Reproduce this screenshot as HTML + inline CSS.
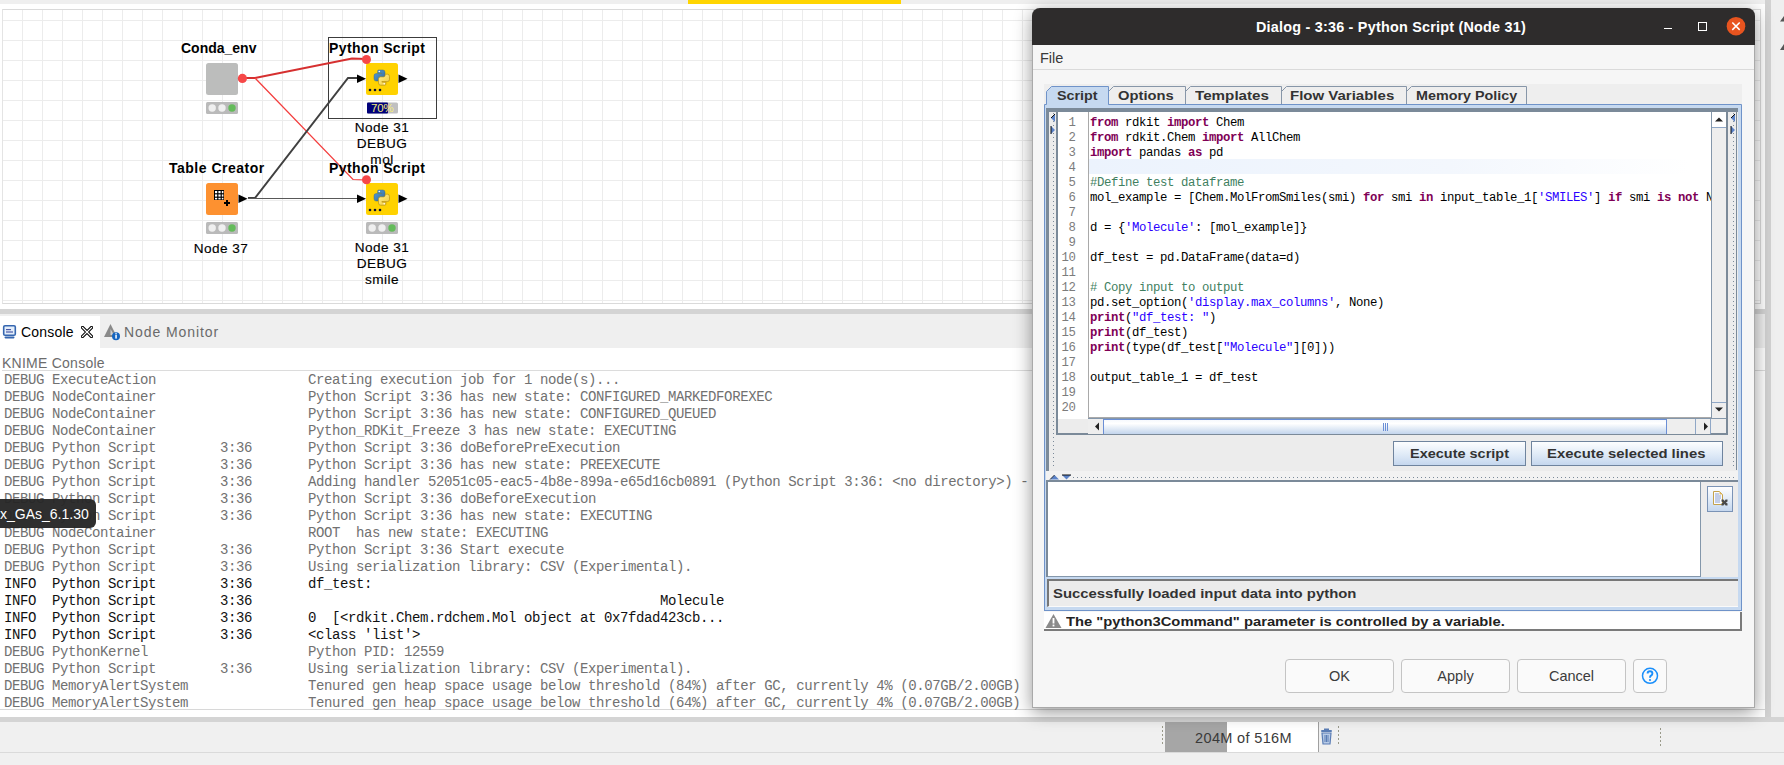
<!DOCTYPE html>
<html><head><meta charset="utf-8">
<style>
*{box-sizing:border-box}
html,body{margin:0;padding:0}
body{width:1784px;height:765px;position:relative;overflow:hidden;background:#efefef;font-family:"Liberation Sans",sans-serif}
.a{position:absolute}
.mono{font-family:"Liberation Mono",monospace}
/* editor */
#topband{left:0;top:0;width:1765px;height:4px;background:#efefef}
#yellow{left:688px;top:0;width:213px;height:4px;background:#ffd500}
#edwhite{left:0;top:4px;width:1765px;height:305px;background:#fff}
#grid{left:2px;top:9px;width:1759px;height:295px;border-top:1px solid #dadada;border-bottom:1px solid #dadada;border-left:1px solid #e4e4e4;border-right:1px solid #dadada;
 background-color:#fff;
 background-image:linear-gradient(to right,#ececec 1px,transparent 1px),linear-gradient(to bottom,#ececec 1px,transparent 1px);
 background-size:20px 20px;background-position:-1px 10px}
#rbar{left:1765px;top:0;width:6px;height:717px;background:#d2d2d2}
#rpanel{left:1771px;top:0;width:13px;height:717px;background:#efefef}
#sash{left:0;top:309px;width:1765px;height:5px;background:#d4d4d4}
/* console */
#contabs{left:0;top:314px;width:1765px;height:34px;background:#efefef}
#contab{left:0;top:316px;width:100px;height:32px;background:#fff}
#conbody{left:0;top:348px;width:1765px;height:369px;background:#fff}
#conline{left:2px;top:370px;width:1763px;height:1px;background:#dcdcdc}
#conbot{left:0;top:709px;width:1765px;height:1px;background:#d8d8d8}
#conpre{left:4px;top:371.8px;margin:0;font-size:14px;letter-spacing:-0.4px;line-height:17px;white-space:pre;color:#717171}
#conpre .i{color:#111}
#statusbar{left:0;top:717px;width:1784px;height:48px;background:#f0f0f0}
.node-label{font-size:14px;font-weight:bold;color:#000;white-space:nowrap}
.node-sub{font-size:13.6px;color:#000;white-space:nowrap;text-align:center;line-height:16px;letter-spacing:0.45px;-webkit-text-stroke:0.15px #000}
</style></head><body>
<div class="a" id="topband"></div>
<div class="a" id="yellow"></div>
<div class="a" id="edwhite"></div>
<div class="a" id="grid"></div>
<div class="a" id="rbar"></div>
<div class="a" id="rpanel"></div>
<div class="a" id="sash"></div>
<div class="a" id="contabs"></div>
<div class="a" id="contab"></div>
<div class="a" id="conbody"></div>
<div class="a" id="conline"></div>
<div class="a" id="conbot"></div>
<div class="a" id="statusbar"></div>
<!--STATUS-->
<div class="a" style="left:0;top:717px;width:1784px;height:4.5px;background:#d4d4d4"></div>
<div class="a" style="left:0;top:752px;width:1784px;height:1px;background:#dadada"></div>
<div class="a" style="left:1162px;top:726px;width:1px;height:20px;background-image:linear-gradient(#9a9a8a 50%,transparent 50%);background-size:1px 4px"></div>
<div class="a" style="left:1338px;top:726px;width:1px;height:20px;background-image:linear-gradient(#9a9a8a 50%,transparent 50%);background-size:1px 4px"></div>
<div class="a" style="left:1660px;top:728px;width:1px;height:20px;background-image:linear-gradient(#9a9a8a 50%,transparent 50%);background-size:1px 4px"></div>
<div class="a" style="left:1165px;top:722px;width:154px;height:30px;background:#fff;border-right:1px solid #a0a0a0"></div>
<div class="a" style="left:1165px;top:722px;width:62px;height:30px;background:#a6a6a6"></div>
<div class="a" style="left:1167px;top:730px;width:153px;text-align:center;font-size:14.5px;letter-spacing:0.35px;color:#3a3a3a">204M of 516M</div>
<svg class="a" style="left:1319px;top:727px" width="16" height="20" viewBox="0 0 16 20">
 <rect x="2" y="3" width="11" height="2" rx="1" fill="#5a7db5"/><rect x="5" y="1.5" width="5" height="2" fill="#5a7db5"/>
 <path d="M3,6 H12 L11,17 H4 Z" fill="#b8cbe6" stroke="#5a7db5" stroke-width="1.2"/>
 <path d="M6,8 V15 M7.5,8 V15 M9,8 V15" stroke="#5a7db5" stroke-width="1"/>
</svg>
<svg class="a" style="left:1771px;top:0" width="13" height="717" viewBox="0 0 13 717">
 <polygon points="13,16 9,21.5 13,21.5" fill="#555"/>
 <polygon points="13,44 9,50 13,50" fill="#555"/>
</svg>
<!--/STATUS-->
<!--WORKFLOW--><svg class="a" style="left:0;top:0" width="1765" height="309" viewBox="0 0 1765 309">
 <defs><linearGradient id="pyb" x1="0" y1="0" x2="1" y2="1"><stop offset="0" stop-color="#5a9fd4"/><stop offset="1" stop-color="#2f6a9e"/></linearGradient><linearGradient id="pyy" x1="0" y1="0" x2="1" y2="1"><stop offset="0" stop-color="#f0c830"/><stop offset="1" stop-color="#fff09a"/></linearGradient></defs>
 <!-- selection rect -->
 <rect x="328.5" y="37.5" width="108" height="81" fill="none" stroke="#3c3c3c" stroke-width="1"/>
 <!-- connections -->
 <polyline points="242,78 255,78 352,58.5 366,59" fill="none" stroke="#d63030" stroke-width="2"/>
 <polyline points="255,78 353,179.5 366,180" fill="none" stroke="#f43d3d" stroke-width="1.25"/>
 <polyline points="248,198 255,198 348,78 358,78" fill="none" stroke="#404040" stroke-width="2"/>
 <line x1="248" y1="198.5" x2="358" y2="198.5" stroke="#585858" stroke-width="1"/>
 <!-- Conda node -->
 <rect x="206" y="63" width="32" height="32" rx="2.5" fill="#bcbdbc"/>
 <circle cx="242.4" cy="78.4" r="4.6" fill="#f64848"/>
 <!-- traffic lights -->
 <g id="tl1"><rect x="206" y="102" width="32" height="12" rx="1.5" fill="#bababa"/>
 <circle cx="212.2" cy="108" r="3.7" fill="#efefef"/><circle cx="222" cy="108" r="3.7" fill="#efefef"/><circle cx="232" cy="108" r="3.7" fill="#64bb5a"/></g>
 <use href="#tl1" transform="translate(0,120)"/>
 <use href="#tl1" transform="translate(160,120)"/>
 <!-- Table creator -->
 <rect x="206" y="183" width="32" height="32" rx="2.5" fill="#fd9130"/>
 <rect x="214" y="190" width="10" height="10" fill="#000"/>
 <g fill="#fff">
  <rect x="215" y="191" width="2.2" height="2.2"/><rect x="218.4" y="191" width="2.2" height="2.2"/><rect x="221.8" y="191" width="1.6" height="2.2"/>
  <rect x="215" y="194.4" width="2.2" height="2.2"/><rect x="218.4" y="194.4" width="2.2" height="2.2"/><rect x="221.8" y="194.4" width="1.6" height="2.2"/>
  <rect x="215" y="197.8" width="2.2" height="1.6"/><rect x="218.4" y="197.8" width="2.2" height="1.6"/><rect x="221.8" y="197.8" width="1.6" height="1.6"/>
 </g>
 <rect x="224" y="202" width="6" height="2" fill="#000"/><rect x="226" y="200" width="2" height="6" fill="#000"/>
 <polygon points="238.5,194.5 247.5,198.8 238.5,203" fill="#000"/>
 <!-- python nodes -->
 <g id="py1">
  <rect x="366" y="63" width="32" height="32" rx="2.5" fill="#ffd200"/>
  <polygon points="357,74.5 366,78.7 357,83" fill="#000"/>
  <polygon points="398.5,74.5 407.5,78.7 398.5,83" fill="#000"/>
  <circle cx="370" cy="90" r="1.3" fill="#0a0f30"/><circle cx="375" cy="90" r="1.3" fill="#0a0f30"/><circle cx="380" cy="90" r="1.3" fill="#0a0f30"/>
  <g transform="translate(374,70)">
   <path d="M4.5,0 H8.8 Q11,0 11,2.2 V6.3 Q11,8.3 9,8.3 H6 Q4.3,8.3 4.3,10 V11 H2 Q0,11 0,8.6 V5.8 Q0,3.6 2.2,3.6 H7.6 V3.1 H3.6 V1.4 Q3.6,0 4.5,0 Z" fill="url(#pyb)" stroke="#2c5d8c" stroke-width="0.4"/>
   <circle cx="5.3" cy="1.5" r="0.8" fill="#fff"/>
   <g transform="rotate(180 7.75 7.6)">
   <path d="M4.5,0 H8.8 Q11,0 11,2.2 V6.3 Q11,8.3 9,8.3 H6 Q4.3,8.3 4.3,10 V11 H2 Q0,11 0,8.6 V5.8 Q0,3.6 2.2,3.6 H7.6 V3.1 H3.6 V1.4 Q3.6,0 4.5,0 Z" fill="url(#pyy)" stroke="#b8921a" stroke-width="0.7"/>
   <circle cx="5.3" cy="1.5" r="0.8" fill="#fff"/>
   </g>
  </g>
 </g>
 <use href="#py1" transform="translate(0,120)"/>
 <circle cx="366.5" cy="59.5" r="4.5" fill="#f64848"/>
 <circle cx="366.5" cy="179.8" r="4.5" fill="#f64848"/>
 <!-- progress -->
 <rect x="367" y="102.5" width="31" height="11" rx="1.5" fill="#c0c0c0"/>
 <rect x="367" y="102.5" width="21" height="11" rx="1" fill="#00007a"/>
</svg>
<div class="a" style="left:371px;top:101.5px;font-size:11.5px;line-height:13px;color:#f4ec7a;letter-spacing:-0.2px">70%</div>
<div class="a node-label" style="left:181px;top:40px">Conda_env</div>
<div class="a node-label" style="left:329px;top:40px;letter-spacing:0.4px">Python Script</div>
<div class="a node-label" style="left:169px;top:160px;letter-spacing:0.5px">Table Creator</div>
<div class="a node-label" style="left:329px;top:159.5px;letter-spacing:0.4px">Python Script</div>
<div class="a node-sub" style="left:332px;top:120px;width:100px">Node 31<br>DEBUG<br>mol</div>
<div class="a node-sub" style="left:171px;top:241px;width:100px">Node 37</div>
<div class="a node-sub" style="left:332px;top:240px;width:100px">Node 31<br>DEBUG<br>smile</div>
<!--/WORKFLOW-->
<!--CONSOLE-->
<!-- console tabs -->
<svg class="a" style="left:2px;top:324px" width="16" height="16" viewBox="0 0 16 16">
 <rect x="1.7" y="1.7" width="11.6" height="9.6" rx="1.3" fill="#e4eefa" stroke="#3566b0" stroke-width="1.6"/>
 <rect x="4" y="5" width="5" height="1.2" fill="#4a5aa8"/><rect x="4" y="7.4" width="7" height="1.2" fill="#4a5aa8"/>
 <rect x="2.5" y="12.6" width="10" height="1.8" rx="0.8" fill="#3566b0"/>
</svg>
<div class="a" style="left:21px;top:324px;font-size:14px;color:#000;letter-spacing:0.2px">Console</div>
<svg class="a" style="left:81px;top:326px" width="12" height="12" viewBox="0 0 12 12">
 <path d="M1.5,1.5 L10.5,10.5 M10.5,1.5 L1.5,10.5" stroke="#000" stroke-width="3.2" stroke-linecap="square"/>
 <path d="M1.5,1.5 L10.5,10.5 M10.5,1.5 L1.5,10.5" stroke="#fff" stroke-width="1.2" stroke-linecap="square"/>
</svg>
<svg class="a" style="left:103px;top:323px" width="18" height="18" viewBox="0 0 18 18">
 <polygon points="7.5,1 14,14 1,14" fill="#8a8a8a"/>
 <polygon points="7.5,6 11,12 7.5,12" fill="#fff" opacity="0.6"/>
 <circle cx="13" cy="13.2" r="4" fill="#1565c0"/>
 <rect x="12.3" y="12" width="1.5" height="3.6" fill="#fff"/><rect x="12.3" y="10.2" width="1.5" height="1.2" fill="#fff"/>
</svg>
<div class="a" style="left:124px;top:324px;font-size:14px;color:#6a6a6a;letter-spacing:0.92px">Node Monitor</div>
<div class="a" style="left:2px;top:355px;font-size:14px;color:#6c6c6c;letter-spacing:0.25px">KNIME Console</div>
<pre class="a mono" id="conpre">DEBUG ExecuteAction                   Creating execution job for 1 node(s)...
DEBUG NodeContainer                   Python Script 3:36 has new state: CONFIGURED_MARKEDFOREXEC
DEBUG NodeContainer                   Python Script 3:36 has new state: CONFIGURED_QUEUED
DEBUG NodeContainer                   Python_RDKit_Freeze 3 has new state: EXECUTING
DEBUG Python Script        3:36       Python Script 3:36 doBeforePreExecution
DEBUG Python Script        3:36       Python Script 3:36 has new state: PREEXECUTE
DEBUG Python Script        3:36       Adding handler 52051c05-eac5-4b8e-899a-e65d16cb0891 (Python Script 3:36: &lt;no directory&gt;) - 
DEBUG Python Script        3:36       Python Script 3:36 doBeforeExecution
DEBUG Python Script        3:36       Python Script 3:36 has new state: EXECUTING
DEBUG NodeContainer                   ROOT  has new state: EXECUTING
DEBUG Python Script        3:36       Python Script 3:36 Start execute
DEBUG Python Script        3:36       Using serialization library: CSV (Experimental).
<span class="i">INFO  Python Script        3:36       df_test: </span>
<span class="i">INFO  Python Script        3:36                                                   Molecule</span>
<span class="i">INFO  Python Script        3:36       0  [&lt;rdkit.Chem.rdchem.Mol object at 0x7fdad423cb...</span>
<span class="i">INFO  Python Script        3:36       &lt;class &#x27;list&#x27;&gt;</span>
DEBUG PythonKernel                    Python PID: 12559
DEBUG Python Script        3:36       Using serialization library: CSV (Experimental).
DEBUG MemoryAlertSystem               Tenured gen heap space usage below threshold (84%) after GC, currently 4% (0.07GB/2.00GB)
DEBUG MemoryAlertSystem               Tenured gen heap space usage below threshold (64%) after GC, currently 4% (0.07GB/2.00GB)</pre>
<div class="a" style="left:0;top:499px;width:96px;height:29px;background:rgba(38,38,38,0.96);border-radius:0 6px 6px 0"></div>
<div class="a" style="left:0;top:505.5px;font-size:14px;color:#fff;white-space:nowrap">x_GAs_6.1.30</div>
<!--/CONSOLE-->
<!--DIALOG-->
<style>
#dshadow{left:1018px;top:0px;width:750px;height:722px;border-radius:12px;
 background:radial-gradient(closest-side,rgba(0,0,0,0.0),rgba(0,0,0,0))}
#dlg{left:1032px;top:8px;width:723px;height:700px;background:#f6f6f6;border:1px solid #a9a9a9;border-top:none;border-radius:8px 8px 0 0;
 box-shadow:0 4px 18px rgba(0,0,0,0.42)}
#title{left:1032px;top:8px;width:723px;height:37px;background:#2e2c2c;border-radius:8px 8px 0 0}
#ttext{left:1029px;top:18.7px;width:722px;text-align:center;color:#fff;font-weight:bold;font-size:14.4px;letter-spacing:0.22px;padding-left:2px}
#menubar{left:1033px;top:45px;width:721px;height:25px;background:#f6f6f6;border-bottom:1px solid #dadada}
.sx{transform-origin:0 0}
.btnt{font-weight:bold;font-size:12.3px;color:#333;white-space:nowrap;line-height:15px;transform-origin:0 0}
.tabt{top:89px;font-weight:bold;font-size:12.3px;color:#333;line-height:15px;white-space:nowrap}
.tab{position:absolute;top:86px;height:19px;background:#eeeeee;border:1px solid #8a9aab;border-bottom:none;
 font-weight:bold;font-size:12.2px;color:#333;line-height:17px;white-space:nowrap}
.tab.sel{background:#c6d9f0;border-color:#6f93c9;height:20px}
.tab .cut{position:absolute;left:-1px;top:-1px;width:0;height:0;border-top:6px solid #eeeeee;border-right:6px solid transparent}
.k{color:#7f0055;font-weight:bold}
.c{color:#3f7f5f}
.s{color:#2a00ff}
#code{left:1090px;top:114px;margin:0;font-size:12.3px;letter-spacing:-0.38px;line-height:15px;color:#000;white-space:pre}
#nums{left:1058px;top:115.5px;width:17.6px;margin:0;font-size:12.3px;letter-spacing:-0.38px;line-height:15px;color:#7c7c7c;white-space:pre;text-align:right}
.btn{position:absolute;border:1px solid #6f849e;background:linear-gradient(#fdfeff,#dce8f6 60%,#c5d7ee);font-weight:bold;font-size:13px;color:#333;text-align:center;white-space:nowrap}
.obtn{position:absolute;top:659px;height:34px;border:1px solid #c4c4c4;border-radius:4px;background:#fafafa;font-size:14.5px;color:#3c3c3c;text-align:center;line-height:32px}
</style>
<div class="a" id="dlg"></div>
<div class="a" id="title"></div>
<div class="a" id="ttext">Dialog - 3:36 - Python Script (Node 31)</div>
<div class="a" style="left:1664px;top:27.5px;width:8px;height:1.6px;background:#fff"></div>
<div class="a" style="left:1698px;top:22px;width:8.5px;height:8.5px;border:1.3px solid #fff"></div>
<svg class="a" style="left:1726px;top:16px" width="20" height="20" viewBox="0 0 20 20">
 <circle cx="10" cy="10.2" r="9.3" fill="#e8541f"/>
 <path d="M6.3,6.5 L13.7,13.9 M13.7,6.5 L6.3,13.9" stroke="#fff" stroke-width="1.5"/>
</svg>
<div class="a" id="menubar"></div>
<div class="a" style="left:1040px;top:50px;font-size:14.5px;color:#3a3a3a">File</div>
<!-- tab strip -->
<div class="a" style="left:1044px;top:84px;width:698px;height:21px;background:#eeeeee"></div>
<svg class="a" style="left:1044px;top:84px" width="698" height="24" viewBox="0 0 698 24">
 <path d="M362.5,21 V7.5 L367.5,2.5 H482.5 V21" fill="#eeeeee" stroke="#8796a8" stroke-width="1"/>
 <path d="M237.5,21 V7.5 L242.5,2.5 H362.5 V21" fill="#eeeeee" stroke="#8796a8" stroke-width="1"/>
 <path d="M141.5,21 V7.5 L146.5,2.5 H237.5 V21" fill="#eeeeee" stroke="#8796a8" stroke-width="1"/>
 <path d="M64.5,21 V7.5 L69.5,2.5 H141.5 V21" fill="#eeeeee" stroke="#8796a8" stroke-width="1"/>
 <path d="M0.5,23 V20.5 H2.5 V7.5 L7.5,2.5 H64.5 V20.5 H697.5 V23" fill="#c6d9f0" stroke="#6f93c9" stroke-width="1"/>
 <rect x="3" y="19" width="61" height="5" fill="#c6d9f0"/>
</svg>
<div class="a tabt sx" style="left:1057px;transform:scaleX(1.165)">Script</div>
<div class="a tabt sx" style="left:1118px;transform:scaleX(1.20)">Options</div>
<div class="a tabt sx" style="left:1195px;transform:scaleX(1.235)">Templates</div>
<div class="a tabt sx" style="left:1290px;transform:scaleX(1.22)">Flow Variables</div>
<div class="a tabt sx" style="left:1416px;transform:scaleX(1.165)">Memory Policy</div>
<!-- content frame -->
<div class="a" style="left:1044px;top:105px;width:698px;height:506px;border:1px solid #6f93c9;border-top:none;background:#c6d9f0"></div>

<!-- upper pane frame -->
<div class="a" style="left:1046px;top:108px;width:692px;height:364px;background:#ececec;border-top:4px solid #7b8a99;border-left:3px solid #7b8a99"></div>
<!-- left dotted splitter -->
<div class="a" style="left:1053px;top:113px;width:1px;height:356px;background-image:linear-gradient(#7b8a99 1px,transparent 1px);background-size:1px 4px"></div>
<!-- right dotted splitter -->
<div class="a" style="left:1733px;top:113px;width:1px;height:356px;background-image:linear-gradient(#7b8a99 1px,transparent 1px);background-size:1px 4px"></div>
<div class="a" style="left:1736px;top:112px;width:1px;height:358px;background:#7b8a99"></div>
<!-- splitter arrows -->
<svg class="a" style="left:1049px;top:113px" width="8" height="22" viewBox="0 0 8 22">
 <polygon points="6,1 2,5 6,9" fill="#5b82c8"/><path d="M6,1 L2,5" stroke="#111" stroke-width="1"/>
 <polygon points="2,13 6,17 2,21" fill="#5b82c8"/><path d="M2,13 L2,21" stroke="#111" stroke-width="1"/>
</svg>
<svg class="a" style="left:1729px;top:113px" width="8" height="22" viewBox="0 0 8 22">
 <polygon points="6,1 2,5 6,9" fill="#5b82c8"/><path d="M6,1 L2,5" stroke="#111" stroke-width="1"/>
 <polygon points="2,13 6,17 2,21" fill="#5b82c8"/><path d="M2,13 L2,21" stroke="#111" stroke-width="1"/>
</svg>
<!-- editor inner frame -->
<div class="a" style="left:1056px;top:112px;width:672px;height:323px;border-left:2px solid #7b8a99;border-bottom:2px solid #7b8a99;border-right:2px solid #7b8a99;background:#ececec"></div>
<div class="a" style="left:1058px;top:112px;width:30px;height:307px;background:#fff"></div>
<div class="a" style="left:1088px;top:112px;width:624px;height:306px;background:#fff;border-left:1px solid #a9a9a9;border-bottom:1px solid #a9a9a9"></div>
<div class="a" style="left:1089px;top:159px;width:600px;height:15px;background:linear-gradient(to right,#ecf3fd,#f3f7fd 60%,#fff)"></div>
<pre class="a mono" id="nums">1
2
3
4
5
6
7
8
9
10
11
12
13
14
15
16
17
18
19
20</pre>
<div class="a" style="left:1089px;top:112px;width:622px;height:305px;overflow:hidden"><pre class="a mono" id="code" style="left:1px;top:3.5px"><span class="k">from</span> rdkit <span class="k">import</span> Chem
<span class="k">from</span> rdkit.Chem <span class="k">import</span> AllChem
<span class="k">import</span> pandas <span class="k">as</span> pd

<span class="c">#Define test dataframe</span>
mol_example = [Chem.MolFromSmiles(smi) <span class="k">for</span> smi <span class="k">in</span> input_table_1[<span class="s">&#x27;SMILES&#x27;</span>] <span class="k">if</span> smi <span class="k">is</span> <span class="k">not</span> None]

d = {<span class="s">&#x27;Molecule&#x27;</span>: [mol_example]}

df_test = pd.DataFrame(data=d)

<span class="c"># Copy input to output</span>
pd.set_option(<span class="s">&#x27;display.max_columns&#x27;</span>, None)
<span class="k">print</span>(<span class="s">&quot;df_test: &quot;</span>)
<span class="k">print</span>(df_test)
<span class="k">print</span>(type(df_test[<span class="s">&quot;Molecule&quot;</span>][0]))

output_table_1 = df_test

</pre></div>
<!-- vertical scrollbar -->
<div class="a" style="left:1711px;top:112px;width:15px;height:306px;background:#eeeeee;border-left:1px solid #8497ab"></div>
<div class="a" style="left:1712px;top:112px;width:14px;height:16px;background:#fff;border-bottom:1px solid #8fa7c6"></div>
<div class="a" style="left:1712px;top:402px;width:14px;height:16px;background:#eeeeee;border-top:1px solid #8fa7c6"></div>
<svg class="a" style="left:1712px;top:112px" width="14" height="306" viewBox="0 0 14 306">
 <polygon points="3,9.5 7,5.5 11,9.5" fill="#222"/>
 <polygon points="3,295.5 7,299.5 11,295.5" fill="#222"/>
</svg>
<!-- horizontal scrollbar -->
<div class="a" style="left:1088px;top:418px;width:623px;height:16px;background:#eeeeee;border-top:1px solid #8497ab"></div>
<div class="a" style="left:1103px;top:419px;width:564px;height:15px;border:1px solid #6b8fd6;border-bottom:none;background:linear-gradient(#f6f9fd,#fff 25%,#dbe6f4 70%,#c3d5ed)"></div>
<div class="a" style="left:1383px;top:423px;width:5px;height:8px;border-left:1px solid #6b8fd6;border-right:1px solid #6b8fd6"></div>
<div class="a" style="left:1385px;top:423px;width:1px;height:8px;background:#6b8fd6"></div>
<div class="a" style="left:1695px;top:419px;width:1px;height:15px;background:#8fa7c6"></div>
<div class="a" style="left:1710px;top:419px;width:1px;height:15px;background:#8fa7c6"></div>
<svg class="a" style="left:1088px;top:419px" width="640" height="15" viewBox="0 0 640 15">
 <polygon points="11,3.5 7,7.5 11,11.5" fill="#222"/>
 <polygon points="616,3.5 620,7.5 616,11.5" fill="#222"/>
</svg>
<div class="a" style="left:1711px;top:418px;width:15px;height:15px;background:#eeeeee;border-top:1px solid #8497ab"></div>
<!-- execute buttons -->
<div class="btn" style="left:1393px;top:441px;width:133px;height:25px"></div><div class="a btnt" style="left:1409.5px;top:446.5px;transform:scaleX(1.177)">Execute script</div>
<div class="btn" style="left:1531px;top:441px;width:192px;height:25px"></div><div class="a btnt" style="left:1547px;top:446.5px;transform:scaleX(1.207)">Execute selected lines</div>
<!-- horizontal splitter -->
<div class="a" style="left:1046px;top:471px;width:692px;height:10px;background:#f2f2f2"></div>
<div class="a" style="left:1073px;top:477px;width:664px;height:1px;background-image:linear-gradient(to right,#7b8a99 1px,transparent 1px);background-size:4px 1px"></div>
<svg class="a" style="left:1049px;top:472px" width="24" height="9" viewBox="0 0 24 9">
 <polygon points="1,7.5 5.5,3 10,7.5" fill="#5b82c8"/><path d="M1,7.5 L5.5,3" stroke="#111" stroke-width="0.8"/>
 <polygon points="13,3 22,3 17.5,7.5" fill="#5b82c8"/><path d="M13,3 L22,3" stroke="#111" stroke-width="1"/>
</svg>
<!-- output pane -->
<div class="a" style="left:1046px;top:480px;width:692px;height:97px;background:#ececec;border-top:2px solid #7b8a99;border-left:2px solid #7b8a99"></div>
<div class="a" style="left:1048px;top:482px;width:653px;height:95px;background:#fff;border-right:1px solid #8497ab;border-bottom:1px solid #8497ab"></div>
<div class="a" style="left:1707px;top:486px;width:26px;height:26px;border:1px solid #7a93b6;background:linear-gradient(#fdfeff,#dce8f6 60%,#c5d7ee)"></div>
<svg class="a" style="left:1711px;top:489px" width="18" height="20" viewBox="0 0 18 20">
 <path d="M2.5,2.5 H8.5 L11.5,5.5 V15.5 H2.5 Z" fill="#fafcff" stroke="#c4a24c" stroke-width="1"/>
 <path d="M8.5,2.5 V5.5 H11.5 Z" fill="#e0b860"/>
 <path d="M4,5 H8 M4,7 H10 M4,9 H10 M4,11 H9 M4,13 H9" stroke="#7f95c8" stroke-width="0.9"/>
 <path d="M11.5,11.5 L15.5,15.5 M15.5,11.5 L11.5,15.5" stroke="#4a4a4a" stroke-width="2.4"/>
 <rect x="10.5" y="10.5" width="2" height="2" fill="#4a4a4a"/><rect x="14.5" y="10.5" width="2" height="2" fill="#4a4a4a"/>
 <rect x="10.5" y="14.5" width="2" height="2" fill="#4a4a4a"/><rect x="14.5" y="14.5" width="2" height="2" fill="#4a4a4a"/>
</svg>
<!-- status -->
<div class="a" style="left:1047px;top:579px;width:691px;height:28px;background:#ececec;border-top:2px solid #777;border-left:2px solid #777;border-bottom:1px solid #fafafa"></div>
<div class="a" style="left:1053px;top:587px;font-weight:bold;font-size:12.3px;transform:scaleX(1.21);transform-origin:0 0;color:#333;white-space:nowrap">Successfully loaded input data into python</div>
<!-- warning -->
<div class="a" style="left:1044px;top:612px;width:698px;height:19px;background:#fff;border-right:2px solid #7a7a7a;border-bottom:2px solid #7a7a7a"></div>
<svg class="a" style="left:1045px;top:613px" width="18" height="16" viewBox="0 0 18 16">
 <polygon points="8.5,1 16.5,15 0.5,15" fill="#8a8a8a"/>
 <rect x="7.6" y="5" width="1.8" height="5.5" fill="#fff"/><rect x="7.6" y="11.6" width="1.8" height="1.8" fill="#fff"/>
</svg>
<div class="a" style="left:1066px;top:615px;font-weight:bold;font-size:12.3px;transform:scaleX(1.20);transform-origin:0 0;color:#222;white-space:nowrap">The "python3Command" parameter is controlled by a variable.</div>
<!-- bottom buttons -->
<div class="obtn" style="left:1285px;width:109px">OK</div>
<div class="obtn" style="left:1401px;width:109px">Apply</div>
<div class="obtn" style="left:1517px;width:109px">Cancel</div>
<div class="obtn" style="left:1633px;width:34px"></div>
<svg class="a" style="left:1640px;top:666px" width="20" height="20" viewBox="0 0 20 20">
 <circle cx="10" cy="9.8" r="7.5" fill="none" stroke="#1b8ffa" stroke-width="1.5"/>
 <path d="M7.6,7.6 Q7.6,5.3 10,5.3 Q12.4,5.3 12.4,7.5 Q12.4,8.8 11,9.6 Q10,10.2 10,11.4 V11.8" fill="none" stroke="#1b8ffa" stroke-width="1.9"/>
 <circle cx="10" cy="14" r="1.1" fill="#1b8ffa"/>
</svg>
<!--/DIALOG-->
</body></html>
